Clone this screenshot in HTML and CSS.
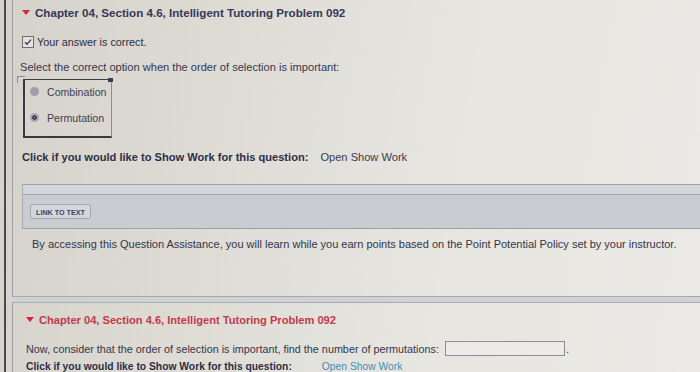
FILE: index.html
```html
<!DOCTYPE html>
<html>
<head>
  <meta charset="utf-8" />
  <title>Intelligent Tutoring Problem 092</title>
  <link rel="stylesheet" href="styles.css">
</head>
<body>
  <div class="screen">
    <div class="question first">
      <h2 class="q-title"><span class="caret"></span>Chapter 04, Section 4.6, Intelligent Tutoring Problem 092</h2>

      <div class="feedback">
        <span class="check">
          <svg width="12" height="12" viewBox="0 0 12 12">
            <rect x="0.5" y="0.5" width="11" height="11" fill="#e4e3de" stroke="#6d6f78" />
            <path d="M3 6.2 L5 8.3 L9 3.6" fill="none" stroke="#3b3d52" stroke-width="1.4" />
          </svg>
        </span>
        Your answer is correct.
      </div>

      <p class="prompt">Select the correct option when the order of selection is important:</p>

      <div class="choices">
        <span class="mark"></span>
        <span class="corner"></span>
        <label class="choice"><span class="radio"></span>Combination</label>
        <label class="choice"><span class="radio on"></span>Permutation</label>
      </div>

      <p class="show-work"><b>Click if you would like to Show Work for this question:</b><a class="open">Open Show Work</a></p>

      <div class="assist">
        <div class="assist-bar"></div>
        <div class="assist-body">
          <button class="link-btn">LINK TO TEXT</button>
        </div>
      </div>

      <p class="assist-note">By accessing this Question Assistance, you will learn while you earn points based on the Point Potential Policy set by your instructor.</p>
    </div>

    <div class="divider"></div>

    <div class="question second">
      <h2 class="q-title red"><span class="caret"></span>Chapter 04, Section 4.6, Intelligent Tutoring Problem 092</h2>
      <p class="ask">Now, consider that the order of selection is important, find the number of permutations: <input type="text" class="answer" />.</p>
      <p class="show-work tight"><b>Click if you would like to Show Work for this question:</b><a class="open blue">Open Show Work</a></p>
    </div>
  </div>
</body>
</html>
```

FILE: styles.css
```css
html, body {
  margin: 0;
  height: 100%;
}

body {
  font-family: "Liberation Sans", Arial, sans-serif;
  color: #2c2e45;
  background: linear-gradient(100deg, #d4d2ca 0%, #dddbd4 30%, #e8e6e1 65%, #ebe9e5 100%);
  overflow: hidden;
}

.screen {
  margin-left: 4px;
  border-left: 2px solid #4a4a4c;
  padding-left: 6px;
  height: 100%;
  box-sizing: border-box;
}

.question {
  border-left: 1px solid #9c9ea2;
}

.first {
  padding: 6px 0 0 9px;
  height: 297px;
  box-sizing: border-box;
  border-bottom: 1px solid #a6a9ad;
}

.q-title {
  margin: 0;
  font-size: 11.6px;
  font-weight: bold;
  color: #39365a;
  display: flex;
  align-items: center;
  height: 13px;
}

.caret {
  width: 0;
  height: 0;
  border-left: 4px solid transparent;
  border-right: 4px solid transparent;
  border-top: 5px solid #d3263a;
  margin-right: 5px;
}

.q-title.red {
  color: #c23a4c;
  font-size: 11.1px;
}

.feedback {
  margin-top: 16px;
  display: flex;
  align-items: center;
  font-size: 10.8px;
  height: 13px;
}

.check {
  display: flex;
  margin-right: 3px;
}

.prompt {
  margin: 13px 0 0 -2px;
  font-size: 11.1px;
  color: #35374f;
  height: 13px;
  line-height: 13px;
}

.choices {
  position: relative;
  width: 86px;
  margin: 5px 0 0 1px;
  padding: 5px 0 12px 0;
  border-top: 1px solid #3d3d42;
  border-left: 2px solid #3a3a3e;
  border-bottom: 2px solid #3a3a3e;
  border-right: 1px solid #8c8d92;
}

.mark {
  position: absolute;
  left: -8px;
  top: -4px;
  width: 7px;
  height: 6px;
  border-top: 1px solid #8b8d94;
  border-left: 1px solid #8b8d94;
}

.corner {
  position: absolute;
  right: -2px;
  top: -2px;
  width: 5px;
  height: 4px;
  background: #3b3c55;
}

.choice {
  display: flex;
  align-items: center;
  height: 13px;
  font-size: 10.6px;
  color: #3d3f56;
  padding-left: 5px;
}

.choice + .choice {
  margin-top: 13px;
}

.radio {
  width: 9px;
  height: 9px;
  border-radius: 50%;
  background: #9d9eb0;
  margin-right: 8px;
  box-sizing: border-box;
}

.radio.on {
  background: #c8c9d2;
  border: 2px solid #a5a6b4;
  box-shadow: inset 0 0 0 2px #3b3c50;
}

.show-work {
  margin: 12px 0 0 0;
  font-size: 11.1px;
  display: flex;
  align-items: center;
  height: 14px;
}

.show-work b {
  color: #2d2f48;
}

.open {
  margin-left: 12px;
  color: #3a3c50;
}

.open.blue {
  margin-left: 30px;
  color: #3f8fb8;
}

.assist {
  margin-top: 20px;
  border-top: 1px solid #9aa1aa;
  border-left: 1px solid #a7adb4;
  border-bottom: 1px solid #9aa1aa;
  background: #c9cdd1;
}

.assist-bar {
  height: 9px;
  background: #d2d6da;
  border-bottom: 1px solid #a0a7af;
}

.assist-body {
  height: 33px;
  padding: 6px 0 0 7px;
  box-sizing: border-box;
}

.link-btn {
  font-family: "Liberation Sans", Arial, sans-serif;
  font-size: 7.2px;
  font-weight: bold;
  color: #3d4466;
  background: #d3d6db;
  border: 1px solid #a3a8b2;
  border-radius: 2px;
  padding: 3px 5px;
  height: 15px;
}

.assist-note {
  margin: 9px 0 0 10px;
  font-size: 11px;
  color: #33354c;
}

.divider {
  height: 5px;
  border-bottom: 1px solid #a9acb0;
  background: #cfd2d5;
}

.second {
  padding: 10px 0 0 13px;
  height: 68px;
  overflow: hidden;
}

.ask {
  margin: 15px 0 0 0;
  font-size: 10.8px;
  color: #34364c;
  display: flex;
  align-items: center;
}

.answer {
  width: 120px;
  height: 15px;
  box-sizing: border-box;
  margin: 0 1px 0 6px;
  border: 1px solid #8c8e95;
  background: #ecebe7;
  padding: 0;
}

.show-work.tight {
  margin-top: 3px;
  font-size: 10.3px;
}
```
